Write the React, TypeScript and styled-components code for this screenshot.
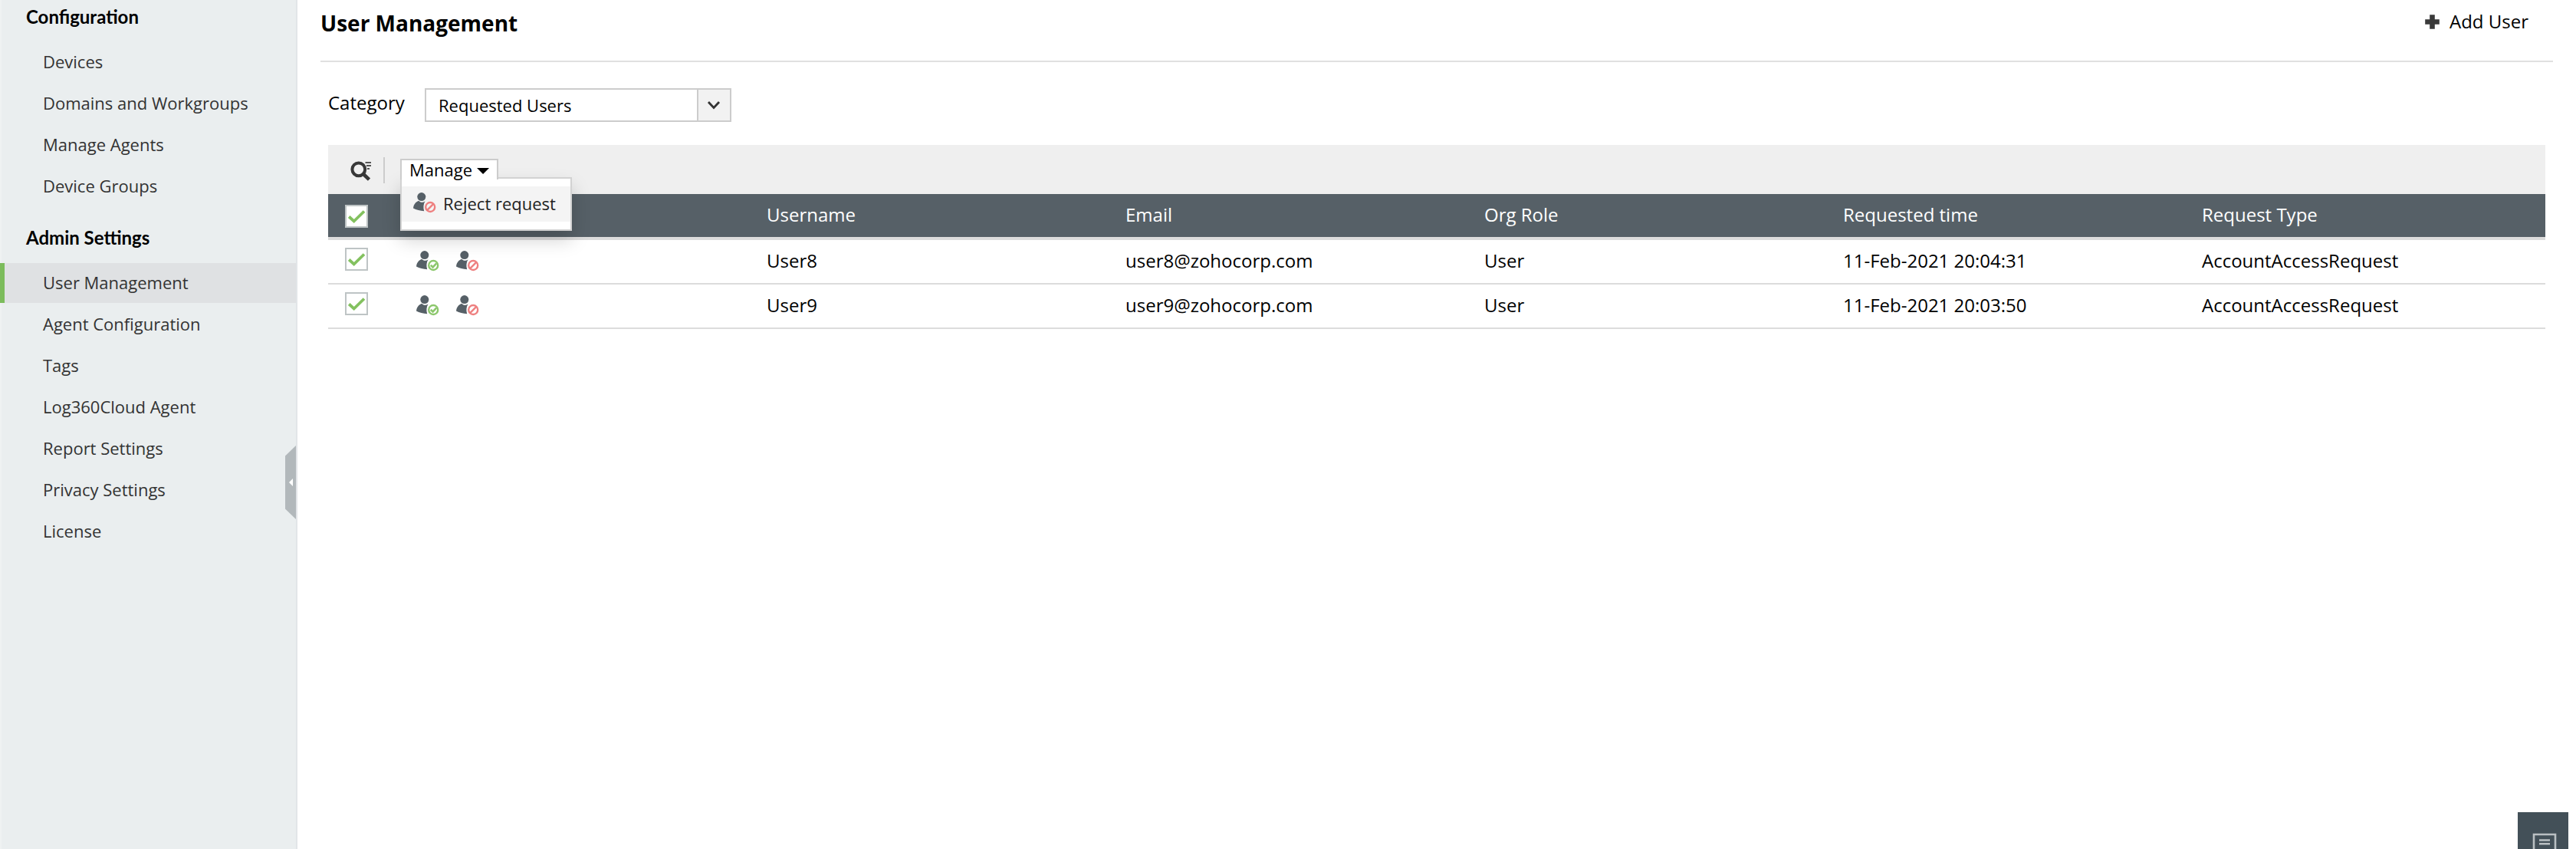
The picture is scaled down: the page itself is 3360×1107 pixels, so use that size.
import React from 'react';
import styled, { createGlobalStyle } from 'styled-components';

const GlobalStyle = createGlobalStyle`
  * { box-sizing: border-box; }
  body { margin: 0; background: #fff; font-family: "Open Sans", "Noto Sans", sans-serif; }
`;

const Page = styled.div`
  display: flex;
  position: relative;
  width: 3360px;
  height: 1107px;
  overflow: hidden;
  background: #fff;
  color: #000;
`;

const Sidebar = styled.nav`
  position: relative;
  flex: none;
  width: 388px;
  padding-top: 7px;
  background: #eaeeef;
  border-right: 2px solid #e2e5e8;
  box-shadow: inset 2px 0 0 #eff2f2;
`;

const NavGroup = styled.section`
  display: flex;
  flex-direction: column;
  gap: 2px;
  margin-bottom: 26px;
`;

const NavHeading = styled.h2`
  margin: 0 0 16px 34px;
  font: 700 24px/30px Lato, sans-serif;
`;

const NavItem = styled.a<{ $active?: boolean }>`
  display: block;
  height: 52px;
  padding-left: ${p => (p.$active ? 50 : 56)}px;
  border-left: ${p => (p.$active ? '6px solid #7cbc5c' : 'none')};
  background: ${p => (p.$active ? '#dfe1e3' : 'transparent')};
  font-size: 22px;
  line-height: 50px;
  color: #333;
`;

const CollapseHandle = styled.svg`
  position: absolute;
  right: 0;
  top: 581px;
`;

const Main = styled.main`
  flex: 1;
  padding: 0 30px;
`;

const Header = styled.header`
  display: flex;
  justify-content: space-between;
  height: 81px;
  border-bottom: 2px solid #e0e0e0;
`;

const Title = styled.h1`
  margin: 0;
  font-size: 28px;
  line-height: 60px;
  font-weight: 700;
`;

const AddUser = styled.div`
  display: flex;
  align-items: center;
  gap: 13px;
  height: 56px;
  padding-right: 32px;
  font-size: 24px;
  line-height: 56px;
`;

const Body = styled.div`
  padding: 34px 10px 0;
`;

const Filter = styled.div`
  display: flex;
  align-items: flex-start;
`;

const FilterLabel = styled.label`
  width: 126px;
  font-size: 24px;
  line-height: 38px;
`;

const SelectBox = styled.div`
  display: flex;
  width: 400px;
  height: 44px;
  border: 2px solid #ccc;
`;

const SelectValue = styled.span`
  flex: 1;
  padding-left: 16px;
  font-size: 22px;
  line-height: 40px;
`;

const SelectArrow = styled.span`
  display: flex;
  align-items: center;
  justify-content: center;
  width: 43px;
  padding-right: 2px;
  border-left: 2px solid #ccc;
  background: #f2f2f2;
`;

const Toolbar = styled.div`
  display: flex;
  align-items: flex-start;
  height: 64px;
  margin-top: 30px;
  padding: 16px 0 0 29px;
  background: #efefef;
`;

const SearchWrap = styled.span`
  width: 45px;
  height: 34px;
  padding-top: 4px;
  border-right: 2px solid #ccc;
`;

const ManageWrap = styled.div`
  position: relative;
  margin: 2px 0 0 20px;
`;

const ManageButton = styled.div`
  position: relative;
  z-index: 2;
  display: flex;
  width: 128px;
  height: 27px;
  padding-left: 10px;
  border: 2px solid #ccc;
  border-bottom: none;
  background: #fff;
  font-size: 22px;
  line-height: 24px;
`;

const Caret = styled.span`
  margin: 10px 0 0 6px;
  width: 16px;
  height: 8px;
  background: #000;
  clip-path: polygon(0 0, 100% 0, 50% 100%);
`;

const Menu = styled.div`
  position: absolute;
  z-index: 1;
  top: 24px;
  left: 0;
  width: 224px;
  height: 70px;
  padding: 10px 0;
  border: 2px solid #d2d2d2;
  background: #fff;
  box-shadow: 0 12px 24px rgba(0, 0, 0, 0.175);
`;

const MenuItem = styled.div`
  display: flex;
  height: 46px;
  padding: 8px 0 0 15px;
  background: #f4f4f4;
  font-size: 22px;
  line-height: 28px;
  color: #222;
`;

const MenuLabel = styled.span`
  margin-left: 9px;
`;

const Row = styled.div<{ $head?: boolean }>`
  display: grid;
  grid-template-columns: 22px 93px 436px repeat(5, 468px);
  height: ${p => (p.$head ? 60 : 58)}px;
  border-bottom: ${p => (p.$head ? 4 : 2)}px solid #dcdcdc;
  background: ${p => (p.$head ? '#566067' : 'transparent')};
  color: ${p => (p.$head ? '#fff' : '#000')};
  font-size: 24px;
  line-height: 54px;
`;

const Cell = styled.div`
  padding-left: 21px;
  white-space: nowrap;
`;

const CheckCell = styled.div<{ $top: number }>`
  grid-column: 2;
  padding-top: ${p => p.$top}px;
`;

const Actions = styled.div`
  display: flex;
  gap: 22px;
  padding-top: 14px;
`;

const ChatButton = styled.button`
  position: absolute;
  left: 3284px;
  top: 1059px;
  width: 66px;
  height: 66px;
  padding: 19px 0 0 19px;
  border: none;
  background: #435058;
  text-align: left;
  line-height: 0;
`;

const Block = styled.svg`
  display: block;
  flex: none;
`;

function Checkbox() {
  return (
    <Block width="30" height="30" viewBox="0 0 30 30">
      <rect x="1" y="1" width="28" height="28" fill="#fff" stroke="#bec4c5" strokeWidth="2" />
      <path d="M5.2 15.5 L11.7 21.5 L25 8.5" fill="none" stroke="#83c15f" strokeWidth="3.8" />
    </Block>
  );
}

function UserIcon({ kind }: { kind: 'accept' | 'reject' }) {
  const color = kind === 'accept' ? '#8cc76c' : '#ee8080';
  return (
    <Block width="30" height="27" viewBox="0 0 30 27">
      <circle cx="10.8" cy="5.6" r="5.5" fill="#566067" />
      <path d="M7 10.8 C3.5 12.5 0.6 15 0 20.5 C4 22.5 9 24 14.2 24.2 C12.8 19.5 13.3 15 15.5 11.2 C12.5 13.6 9.5 13.2 7 10.8 Z" fill="#566067" />
      <circle cx="22.2" cy="19" r="6" fill="none" stroke={color} strokeWidth="2.4" />
      {kind === 'accept'
        ? <path d="M18.8 18.8 L21.6 21.5 L26.3 16.4" fill="none" stroke={color} strokeWidth="2.6" />
        : <path d="M18.1 23.1 L26.3 14.9" stroke={color} strokeWidth="2.4" />}
    </Block>
  );
}

function SearchIcon() {
  return (
    <Block width="30" height="28" viewBox="0 0 30 28">
      <circle cx="10.8" cy="11.8" r="8.4" fill="none" stroke="#383838" strokeWidth="4" />
      <path d="M17 18 L24.5 25.2" stroke="#383838" strokeWidth="4.6" />
      <path d="M19.5 3 H27 M21 7 H27 M22 11 H25" stroke="#555" strokeWidth="2.2" />
    </Block>
  );
}

const groups = [
  { title: 'Configuration', items: ['Devices', 'Domains and Workgroups', 'Manage Agents', 'Device Groups'] },
  {
    title: 'Admin Settings',
    items: ['User Management', 'Agent Configuration', 'Tags', 'Log360Cloud Agent', 'Report Settings', 'Privacy Settings', 'License'],
  },
];

const columns = ['Username', 'Email', 'Org Role', 'Requested time', 'Request Type'];
const users = [
  ['User8', 'user8@zohocorp.com', 'User', '11-Feb-2021 20:04:31', 'AccountAccessRequest'],
  ['User9', 'user9@zohocorp.com', 'User', '11-Feb-2021 20:03:50', 'AccountAccessRequest'],
];

export default function App() {
  return (
    <Page>
      <GlobalStyle />
      <Sidebar>
        {groups.map(g => (
          <NavGroup key={g.title}>
            <NavHeading>{g.title}</NavHeading>
            {g.items.map(i => <NavItem key={i} $active={i === 'User Management'}>{i}</NavItem>)}
          </NavGroup>
        ))}
        <CollapseHandle width="14" height="96" viewBox="0 0 14 96">
          <path d="M14 0 L0 13.5 V82.5 L14 96 Z" fill="#b2b8bb" />
          <path d="M5 48 L10 43 V53 Z" fill="#fff" />
        </CollapseHandle>
      </Sidebar>
      <Main>
        <Header>
          <Title>User Management</Title>
          <AddUser>
            <Block width="19" height="19" viewBox="0 0 19 19">
              <path d="M6.2 0.2 H12.8 V6.2 H18.8 V12.8 H12.8 V18.8 H6.2 V12.8 H0.2 V6.2 H6.2 Z" fill="#3a3a3a" />
            </Block>
            <span>Add User</span>
          </AddUser>
        </Header>
        <Body>
          <Filter>
            <FilterLabel>Category</FilterLabel>
            <SelectBox>
              <SelectValue>Requested Users</SelectValue>
              <SelectArrow>
                <Block width="18" height="12" viewBox="0 0 18 12">
                  <path d="M2 2 L9 9.4 L16 2" fill="none" stroke="#333" strokeWidth="2.8" />
                </Block>
              </SelectArrow>
            </SelectBox>
          </Filter>
          <Toolbar>
            <SearchWrap><SearchIcon /></SearchWrap>
            <ManageWrap>
              <ManageButton>Manage<Caret /></ManageButton>
              <Menu>
                <MenuItem><UserIcon kind="reject" /><MenuLabel>Reject request</MenuLabel></MenuItem>
              </Menu>
            </ManageWrap>
          </Toolbar>
          <Row $head>
            <CheckCell $top={14}><Checkbox /></CheckCell>
            <div />
            {columns.map(c => <Cell key={c}>{c}</Cell>)}
          </Row>
          {users.map(u => (
            <Row key={u[0]}>
              <CheckCell $top={10}><Checkbox /></CheckCell>
              <Actions><UserIcon kind="accept" /><UserIcon kind="reject" /></Actions>
              {u.map(v => <Cell key={v}>{v}</Cell>)}
            </Row>
          ))}
        </Body>
      </Main>
      <ChatButton>
        <Block width="32" height="32" viewBox="0 0 32 32">
          <path d="M2 2 H30 V23 H14 L7.5 29.5 V23 H2 Z" fill="none" stroke="#b9bfc2" strokeWidth="2.6" />
          <path d="M9 9.5 H23 M9 14.3 H23" stroke="#b9bfc2" strokeWidth="2.4" />
        </Block>
      </ChatButton>
    </Page>
  );
}
